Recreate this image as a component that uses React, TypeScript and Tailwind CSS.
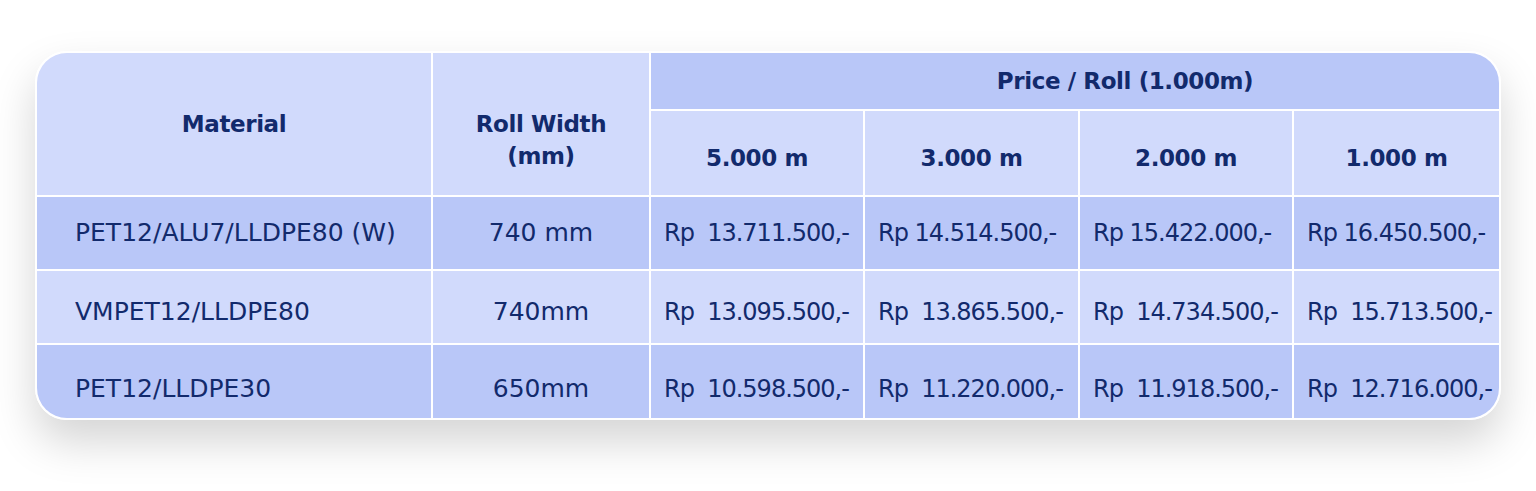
const rows = [
  {
    material: "PET12/ALU7/LLDPE80 (W)",
    width: "740 mm",
    prices: ["Rp  13.711.500,-", "Rp 14.514.500,-", "Rp 15.422.000,-", "Rp 16.450.500,-"],
    pad: "pt-0",
  },
  {
    material: "VMPET12/LLDPE80",
    width: "740mm",
    prices: ["Rp  13.095.500,-", "Rp  13.865.500,-", "Rp  14.734.500,-", "Rp  15.713.500,-"],
    pad: "pt-[9px]",
  },
  {
    material: "PET12/LLDPE30",
    width: "650mm",
    prices: ["Rp  10.598.500,-", "Rp  11.220.000,-", "Rp  11.918.500,-", "Rp  12.716.000,-"],
    pad: "pt-[15px]",
  },
]

const light = "bg-[#d1dafc]"
const dark = "bg-[#b9c7f8]"

export default function App() {
  return (
    <div className="w-[1536px] h-[491px] bg-white pt-[51px] pl-[35px] font-['DejaVu_Sans',sans-serif] text-[#122a6c]">
      <div className="w-[1466px] rounded-[32px] overflow-hidden border-2 border-white shadow-[0_22px_44px_rgba(0,0,0,0.17)]">
        <table className="w-full border-collapse table-fixed">
          <colgroup>
            <col className="w-[395px]" />
            <col className="w-[218px]" />
            <col className="w-[214px]" />
            <col className="w-[215px]" />
            <col className="w-[214px]" />
            <col />
          </colgroup>
          <thead>
            <tr className="h-[57px]">
              <th
                rowSpan={2}
                className={`${light} border-r-2 border-b-2 border-white text-[23px] tracking-[-0.4px] font-bold`}
              >
                Material
              </th>
              <th
                rowSpan={2}
                className={`${light} border-r-2 border-b-2 border-white text-[23px] tracking-[-0.4px] font-bold leading-[32px] pt-[32px]`}
              >
                Roll Width
                <br />
                (mm)
              </th>
              <th
                colSpan={4}
                className={`${dark} border-b-2 border-white text-[23px] tracking-[-0.4px] font-bold pl-[100px]`}
              >
                Price / Roll (1.000m)
              </th>
            </tr>
            <tr className="h-[86px]">
              {["5.000 m", "3.000 m", "2.000 m", "1.000 m"].map((h, i) => (
                <th
                  key={h}
                  className={`${light} border-b-2 border-white text-[23px] tracking-[-0.4px] font-bold pt-[10px] ${i < 3 ? "border-r-2" : ""}`}
                >
                  {h}
                </th>
              ))}
            </tr>
          </thead>
          <tbody>
            {rows.map((r, ri) => {
              const bg = ri % 2 === 0 ? dark : light
              return (
                <tr key={r.material} className="h-[74px]">
                  <td className={`${bg} border-r-2 border-white ${ri < 2 ? "border-b-2" : ""} pl-[38px] ${r.pad} text-[25px]`}>
                    {r.material}
                  </td>
                  <td className={`${bg} border-r-2 border-white ${ri < 2 ? "border-b-2" : ""} text-center ${r.pad} text-[25px]`}>
                    {r.width}
                  </td>
                  {r.prices.map((p, pi) => (
                    <td
                      key={pi}
                      className={`${bg} border-white ${pi < 3 ? "border-r-2" : ""} ${ri < 2 ? "border-b-2" : ""} pl-[13px] ${r.pad} text-[24px] tracking-[-1px] whitespace-pre`}
                    >
                      {p}
                    </td>
                  ))}
                </tr>
              )
            })}
          </tbody>
        </table>
      </div>
    </div>
  )
}
